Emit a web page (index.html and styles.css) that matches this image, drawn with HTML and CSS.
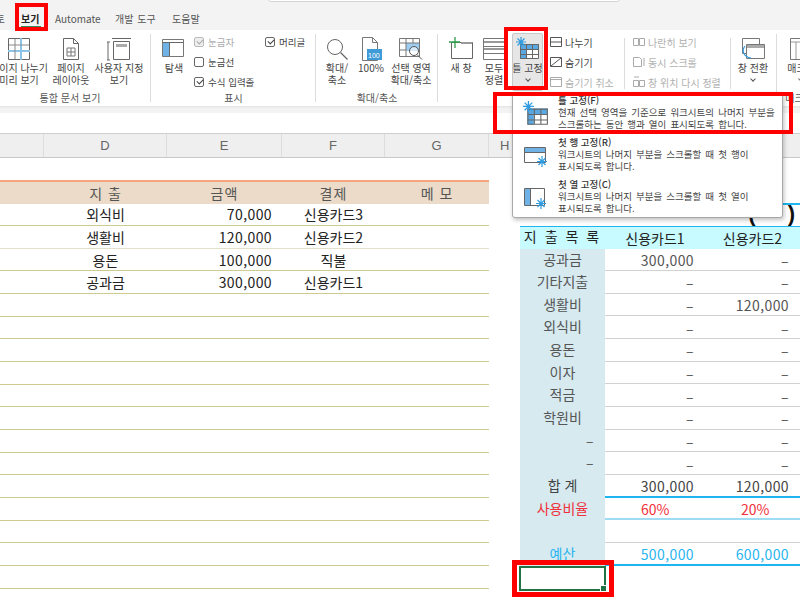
FILE: index.html
```html
<!DOCTYPE html>
<html lang="ko">
<head>
<meta charset="utf-8">
<title>보기</title>
<link rel="stylesheet" href="styles.css">
</head>
<body>
<div class="app">
  <header class="tabs">
    <div class="search"></div>
    <span class="tab cut">토</span>
    <span class="tab active">보기</span>
    <span class="tab">Automate</span>
    <span class="tab">개발 도구</span>
    <span class="tab">도움말</span>
  </header>

  <section class="ribbon">
    <div class="group g1">
      <div class="items">
        <div class="btn w60"><svg width="24" height="24" viewBox="0 0 24 24"><path d="M1.500 1.500h21v21h-21z" fill="#fff" stroke="#666"/><path d="M1 14h22M14 1v22" stroke="#8cc4e8" stroke-width="2"/><path d="M8 2v20M2 8h20" stroke="#888"/></svg><span>페이지 나누기<br>미리 보기</span></div>
        <div class="btn w44"><svg width="24" height="24" viewBox="0 0 24 24"><path d="M4.500 1.500h10l5 5v16h-15z" fill="#fff" stroke="#666"/><path d="M14.500 1.500v5h5" fill="none" stroke="#666"/><path d="M8 11h8v8H8zM8 15h8M12 11v8" fill="none" stroke="#777"/></svg><span>페이지<br>레이아웃</span></div>
        <div class="btn w52"><svg width="24" height="24" viewBox="0 0 24 24"><path d="M6.500 4.500h16v18h-16z" fill="#fff" stroke="#666"/><path d="M9 7h11v3H9z" fill="#aaa"/><path d="M5 1.500h19M1 5v18M-1 5h4M-1 23h4" stroke="#666" fill="none"/></svg><span>사용자 지정<br>보기</span></div>
      </div>
      <div class="glabel">통합 문서 보기</div>
    </div>

    <div class="group g2">
      <div class="items">
        <div class="btn w40"><svg width="24" height="24" viewBox="0 0 24 24"><path d="M.5 2.500h21v17h-21z" fill="#fff" stroke="#777"/><path d="M1 6h6v13H1z" fill="#6fb3e6"/><path d="M7.500 6v13M1 5.500h20" stroke="#666"/></svg><span>탐색</span></div>
        <div class="checks c1">
          <label class="check off"><i class="box on"></i>눈금자</label>
          <label class="check"><i class="box"></i>눈금선</label>
          <label class="check"><i class="box on"></i>수식 입력줄</label>
        </div>
        <div class="checks c2">
          <label class="check"><i class="box on"></i>머리글</label>
        </div>
      </div>
      <div class="glabel">표시</div>
    </div>

    <div class="group g3">
      <div class="items">
        <div class="btn w36"><svg width="24" height="24" viewBox="0 0 24 24"><circle cx="10" cy="10" r="7.500" fill="#fff" stroke="#666"/><path d="M15.500 15.500l7 7" stroke="#666" stroke-width="1.200"/></svg><span>확대/<br>축소</span></div>
        <div class="btn w32"><svg width="24" height="24" viewBox="0 0 24 24"><path d="M3.500 .5h10l5 5v18h-15z" fill="#fff" stroke="#777"/><path d="M13.500 .5v5h5" fill="none" stroke="#777"/><path d="M8 12h15v11H8z" fill="#3f9bd8"/></svg><b class="hundred">100</b><span>100%</span></div>
        <div class="btn w48"><svg width="24" height="24" viewBox="0 0 24 24"><path d="M.5 1.500h20v18H.5z" fill="#fff" stroke="#777"/><path d="M7 6h13v8H7z" fill="#9fcdf0"/><path d="M1 6h20M1 13h6M7 1v19M14 1v5" stroke="#777"/><circle cx="15" cy="14" r="4.500" fill="#fff" fill-opacity=".6" stroke="#555"/><path d="M18 17.500l5 5" stroke="#555"/></svg><span>선택 영역<br>확대/축소</span></div>
      </div>
      <div class="glabel">확대/축소</div>
    </div>

    <div class="group g4">
      <div class="items">
        <div class="btn w34"><svg width="24" height="24" viewBox="0 0 24 24"><path d="M2.500 5.500h21v16h-21z" fill="#fff" stroke="#666"/><path d="M12 5h11v2H12z" fill="#999"/><path d="M6 0v11M0 5h11" stroke="#2e9e4b" stroke-width="1.300"/></svg><span>새 창</span></div>
        <div class="btn w32"><svg width="24" height="24" viewBox="0 0 24 24"><path d="M1.500 1.500h21v21h-21z" fill="#fff" stroke="#777"/><path d="M2 4h20v2H2zM2 11h20v2H2z" fill="#999"/><path d="M2 9.500h20M2 16.500h20" stroke="#777"/></svg><span>모두<br>정렬</span></div>
        <div class="btn freeze">
          <svg width="24" height="24" viewBox="0 0 24 24"><use href="#i-freeze"/></svg>
          <span>틀 고정</span>
          <em class="chev"></em>
        </div>
        <div class="stack s1">
          <div class="small"><svg width="14" height="12" viewBox="0 0 14 12"><path d="M1.500 1.500h11v9h-11zM1.500 6h11" fill="#fff" stroke="#555"/></svg>나누기</div>
          <div class="small"><svg width="14" height="12" viewBox="0 0 14 12"><path d="M1.500 1.500h11v9h-11z" fill="#fff" stroke="#555"/><path d="M2 10l10-8" stroke="#555"/></svg>숨기기</div>
          <div class="small off"><svg width="14" height="12" viewBox="0 0 14 12"><path d="M1.500 1.500h11v9h-11zM2 3.500h10" fill="#fff" stroke="#aaa"/></svg>숨기기 취소</div>
        </div>
        <div class="stack s2">
          <div class="small off"><svg width="14" height="12" viewBox="0 0 14 12"><path d="M1.500 2.500h5v7h-5zM7.500 2.500h5v7h-5z" fill="#fff" stroke="#aaa"/></svg>나란히 보기</div>
          <div class="small off"><svg width="14" height="12" viewBox="0 0 14 12"><path d="M1.500 1.500h6l2 2v7h-8z" fill="#fff" stroke="#aaa"/><path d="M12 2v8" stroke="#aaa"/></svg>동시 스크롤</div>
          <div class="small off"><svg width="14" height="12" viewBox="0 0 14 12"><path d="M1.500 4.500h5v6h-5zM7.500 4.500h5v6h-5z" fill="#fff" stroke="#aaa"/><path d="M2 1h5" stroke="#aaa"/></svg>창 위치 다시 정렬</div>
        </div>
        <div class="btn w44 switch"><svg width="24" height="24" viewBox="0 0 24 24"><path d="M1.500 1.500h17v15h-17z" fill="#fff" stroke="#777"/><path d="M5.500 7.500h18v14h-18z" fill="#fff" stroke="#777"/><path d="M6 8h17v3H6z" fill="#aaa"/><path d="M4 9c-4 5-1 11 6 12" fill="none" stroke="#2f9ce0" stroke-width="1.200"/></svg><span>창 전환</span><em class="chev"></em></div>
      </div>
    </div>

    <div class="group g5">
      <div class="items">
        <div class="btn w44"><svg width="24" height="24" viewBox="0 0 24 24"><path d="M1.500 1.500h21v21h-21z" fill="#fff" stroke="#777"/><path d="M2 5h20M7 5v17M12 8h7M12 12h7M12 16h7" stroke="#999"/></svg><span>매크로</span><em class="chev"></em></div>
      </div>
      <div class="glabel">매크로</div>
    </div>
  </section>

  <div class="band"></div>
  <div class="formula"></div>

  <div class="cols">
    <span class="col c-c"></span>
    <span class="col c-d">D</span>
    <span class="col c-e">E</span>
    <span class="col c-f">F</span>
    <span class="col c-g">G</span>
    <span class="col c-h">H</span>
  </div>

  <main class="sheet">
    <div class="ledger">
      <div class="lrow lhead"><span></span><span>지 출</span><span class="ctr">금액</span><span>결제</span><span>메 모</span></div>
      <div class="lrow"><span></span><span>외식비</span><span class="num">70,000</span><span>신용카드3</span><span></span></div>
      <div class="lrow pale"><span></span><span>생활비</span><span class="num">120,000</span><span>신용카드2</span><span></span></div>
      <div class="lrow"><span></span><span>용돈</span><span class="num">100,000</span><span>직불</span><span></span></div>
      <div class="lrow"><span></span><span>공과금</span><span class="num">300,000</span><span>신용카드1</span><span></span></div>
      <div class="lrow"></div><div class="lrow"></div><div class="lrow"></div><div class="lrow"></div>
      <div class="lrow"></div><div class="lrow"></div><div class="lrow"></div><div class="lrow"></div>
      <div class="lrow"></div><div class="lrow"></div><div class="lrow"></div><div class="lrow"></div>
      <div class="lrow"></div><div class="lrow"></div>
    </div>

    <div class="summary">
      <div class="title"><span class="paren">(</span><span class="paren">)</span></div>
      <div class="srow shead"><span>지 출 목 록</span><span>신용카드1</span><span>신용카드2</span></div>
      <div class="srow"><span>공과금</span><span class="num">300,000</span><span class="num">–</span></div>
      <div class="srow"><span>기타지출</span><span class="num">–</span><span class="num">–</span></div>
      <div class="srow"><span>생활비</span><span class="num">–</span><span class="num">120,000</span></div>
      <div class="srow"><span>외식비</span><span class="num">–</span><span class="num">–</span></div>
      <div class="srow"><span>용돈</span><span class="num">–</span><span class="num">–</span></div>
      <div class="srow"><span>이자</span><span class="num">–</span><span class="num">–</span></div>
      <div class="srow"><span>적금</span><span class="num">–</span><span class="num">–</span></div>
      <div class="srow"><span>학원비</span><span class="num">–</span><span class="num">–</span></div>
      <div class="srow"><span class="num">–</span><span class="num">–</span><span class="num">–</span></div>
      <div class="srow"><span class="num">–</span><span class="num">–</span><span class="num">–</span></div>
      <div class="srow total"><span>합 계</span><span class="num">300,000</span><span class="num">120,000</span></div>
      <div class="srow rate"><span>사용비율</span><span class="pct">60%</span><span class="pct">20%</span></div>
      <div class="srow"><span></span><span></span><span></span></div>
      <div class="srow budget"><span>예산</span><span class="num">500,000</span><span class="num">600,000</span></div>
      <div class="cellrow"><div class="selected"><i class="handle"></i></div></div>
    </div>
  </main>

  <aside class="menu">
    <div class="mitem">
      <svg width="26" height="26" viewBox="0 0 26 26"><use href="#i-freeze"/></svg>
      <div class="mtext"><b>틀 고정(F)</b><p>현재 선택 영역을 기준으로 워크시트의 나머지 부분을<br>스크롤하는 동안 행과 열이 표시되도록 합니다.</p></div>
    </div>
    <div class="mitem">
      <svg width="26" height="26" viewBox="0 0 26 26"><path d="M1.500 4.500h21v15h-21z" fill="#fff" stroke="#666"/><path d="M2 5h20v4H2z" fill="#6fb3e6"/><path d="M1.500 9.500h21" stroke="#666"/><path d="M19 13v11M14 18.500h10M15.500 15l7 7M22.500 15l-7 7" stroke="#2f9ce0" stroke-width="1.200"/></svg>
      <div class="mtext"><b>첫 행 고정(R)</b><p>워크시트의 나머지 부분을 스크롤할 때 첫 행이<br>표시되도록 합니다.</p></div>
    </div>
    <div class="mitem">
      <svg width="26" height="26" viewBox="0 0 26 26"><path d="M1.500 3.500h20v17h-20z" fill="#fff" stroke="#666"/><path d="M2 4h5v16H2z" fill="#6fb3e6"/><path d="M7.500 4v16" stroke="#666"/><path d="M18 13v11M13 18.500h10M14.500 15l7 7M21.500 15l-7 7" stroke="#2f9ce0" stroke-width="1.200"/></svg>
      <div class="mtext"><b>첫 열 고정(C)</b><p>워크시트의 나머지 부분을 스크롤할 때 첫 열이<br>표시되도록 합니다.</p></div>
    </div>
  </aside>

  <div class="mark m-tab"></div>
  <div class="mark m-btn"></div>
  <div class="mark m-item"></div>
  <div class="mark m-cell"></div>

  <svg class="defs" width="0" height="0">
    <symbol id="i-freeze" viewBox="0 0 24 24">
      <path d="M4 7h19v15H4z" fill="#fff"/>
      <path d="M4 7h19v5H4zM4 12h6v10H4z" fill="#5aa8e2"/>
      <path d="M4.500 7.500h18v14h-18zM4 12.500h19M4 17.500h19M10.500 7v15M16.500 7v15" fill="none" stroke="#666"/>
      <path d="M5 0v10M0 5h10M1.500 1.500l7 7M8.500 1.500l-7 7" stroke="#2f9ce0" stroke-width="1.200"/>
    </symbol>
  </svg>
</div>
</body>
</html>
```

FILE: styles.css
```css
* { box-sizing: border-box; }
html, body { margin: 0; padding: 0; }
body { width: 800px; height: 600px; overflow: hidden; background: #fff; font-family: "Noto Sans CJK KR", "Noto Sans", sans-serif; color: #444; }
.app { position: relative; width: 800px; height: 600px; overflow: hidden; }
.defs { position: absolute; }

/* tabs */
.tabs { position: relative; height: 30px; background: #f3f3f3; display: flex; align-items: center; padding-top: 7px; font-size: 10px; color: #555; }
.search { position: absolute; left: 268px; top: -6px; width: 352px; height: 8px; background: #fff; border: 1px solid #d4d4d4; border-radius: 3px; }
.tab { white-space: nowrap; }
.tab.cut { width: 5px; overflow: hidden; direction: rtl; margin-right: 16px; }
.tab.active { width: 20px; margin-right: 14px; font-weight: 700; color: #222; border-bottom: 1px solid #2f8a57; line-height: 15px; height: 16px; }
.tab:nth-of-type(3) { width: 60px; }
.tab:nth-of-type(4) { width: 57px; word-spacing: 1px; }

/* ribbon */
.ribbon { height: 76px; background: #fff; display: flex; overflow: hidden; }
.group { position: relative; flex: none; height: 76px; padding-top: 3px; }
.group::after { content: ""; position: absolute; right: 0; top: 4px; height: 68px; width: 1px; background: #dcdcdc; }
.g1 { width: 162px; margin-left: -11px; }
.g2 { width: 165px; padding-left: 3px; }
.g3 { width: 122px; padding-left: 3px; }
.g4 { width: 339px; padding-left: 6px; }
.g5 { width: 44px; padding-left: 2px; }
.g5::after { display: none; }
.items { display: flex; height: 60px; }
.glabel { position: absolute; left: 0; right: 0; top: 61px; text-align: center; font-size: 10px; line-height: 14px; color: #555; }
.btn { position: relative; flex: none; display: flex; flex-direction: column; align-items: center; padding-top: 4px; font-size: 10px; line-height: 12px; text-align: center; color: #444; white-space: nowrap; }
.btn svg { display: block; margin-bottom: 1px; }
.w60 { width: 60px; } .w52 { width: 52px; } .w48 { width: 48px; } .w44 { width: 44px; } .w40 { width: 40px; } .w36 { width: 36px; } .w34 { width: 34px; } .w32 { width: 32px; }
.hundred { position: absolute; left: 13px; top: 18px; font-size: 7px; line-height: 9px; font-weight: 400; color: #fff; font-family: "Liberation Sans", sans-serif; }
.btn.freeze { width: 31px; height: 58px; margin-left: 2px; background: #e6e6e6; border: 1px solid #c8c8c8; border-radius: 2px; padding-top: 3px; }
.chev { display: block; width: 4px; height: 4px; margin-top: 3px; border-right: 1px solid #555; border-bottom: 1px solid #555; transform: rotate(45deg); }

.checks { display: flex; flex-direction: column; margin-top: -1px; }
.c1 { width: 71px; }
.check { display: flex; align-items: center; height: 20px; font-size: 9.500px; color: #444; white-space: nowrap; }
.check.off { color: #aaa; }
.box { display: block; position: relative; width: 10px; height: 10px; margin-right: 4px; border: 1px solid #666; border-radius: 2px; background: #fff; }
.box.on::after { content: ""; position: absolute; left: 2px; top: 1px; width: 5px; height: 3px; border-left: 1px solid #444; border-bottom: 1px solid #444; transform: rotate(-45deg); }
.check.off .box { border-color: #bbb; background: #eee; }
.check.off .box.on::after { border-color: #aaa; }

.stack { flex: none; display: flex; flex-direction: column; margin-top: -1px; }
.s1 { width: 83px; margin-left: 6px; position: relative; }
.s1::after { content: ""; position: absolute; right: 7px; top: 6px; bottom: 4px; width: 1px; background: #dcdcdc; }
.s2 { width: 99px; position: relative; }
.s2::after { content: ""; position: absolute; right: 0; top: 6px; bottom: 4px; width: 1px; background: #dcdcdc; }
.small { display: flex; align-items: center; gap: 2px; height: 20px; font-size: 10px; color: #444; white-space: nowrap; }
.small.off { color: #b0b0b0; }

.band { height: 7px; background: linear-gradient(#e4e4e4, #f3f3f3 40%, #f3f3f3); }
.formula { height: 21px; background: #fff; border-bottom: 1px solid #cfcfcf; }

/* column headers */
.cols { display: flex; height: 24px; background: #efefef; border-bottom: 1px solid #c8c8c8; font-family: "Liberation Sans", sans-serif; font-size: 13px; color: #666; }
.col { flex: none; display: flex; align-items: center; justify-content: center; border-right: 1px solid #dcdcdc; }
.c-c { width: 44px; } .c-d { width: 123px; } .c-e { width: 115px; } .c-f { width: 103px; } .c-g { width: 104px; } .c-h { flex: 1; justify-content: flex-start; padding-left: 11px; border-right: 0; }

/* sheet */
.sheet { display: flex; align-items: flex-start; height: 442px; font-size: 14px; color: #222; }
.ledger { flex: none; width: 489px; padding-top: 22px; }
.lrow { display: grid; grid-template-columns: 44px 123px 115px 103px 104px; height: 22.670px; align-items: center; text-align: center; border-bottom: 1px solid #cfcb8f; line-height: 20px; }
.lrow.pale { border-bottom: 1px solid #e2e0c8; }
.lhead { height: 23.500px; background: #ebdbc8; border-top: 2px solid #f4a57c; border-bottom: 0; color: #555; letter-spacing: 1px; line-height: 18px; }
.num { text-align: right; letter-spacing: .4px; padding-right: 10px; }
.summary { flex: none; width: 280px; margin-left: 31px; }
.title { height: 68px; position: relative; display: flex; justify-content: flex-end; align-items: flex-end; gap: 32px; padding-right: 5px; font-size: 22px; color: #111; line-height: 26px; font-family: "Liberation Sans", sans-serif; font-weight: 700; }
.title::before { content: ""; position: absolute; left: 258px; right: 0; top: 45px; height: 2px; background: #1fb5f0; }
.paren { position: relative; top: 1px; }
.srow { display: grid; grid-template-columns: 85px 100px 95px; height: 22.670px; align-items: center; border-bottom: 1px solid #d2d2d2; color: #555; line-height: 20px; }
.srow > span:first-child { background: #d6eaf0; text-align: center; height: 22.670px; line-height: 21px; }
.srow > span.num { padding-right: 11px; }
.srow > span.num:first-child { text-align: right; }
.shead { height: 22.500px; background: #c8fbff; border-top: 1px solid #1fb5f0; border-bottom: 0; color: #222; text-align: center; line-height: 18px; }
.shead > span:first-child { background: transparent; letter-spacing: 2px; line-height: 18px; }
.total { border-bottom: 2px solid #1fb5f0; color: #444; }
.rate { color: #f0303a; border-bottom: 2px solid #9fdcf4; }
.pct { padding-left: 36px; }
.budget { color: #28b4ee; border-bottom: 2px solid #1fb5f0; }
.selected { position: relative; width: 87px; height: 25px; margin-left: -1px; border: 2px solid #217346; }
.handle { position: absolute; right: -3px; bottom: -3px; width: 5px; height: 5px; background: #217346; border: 1px solid #fff; box-sizing: content-box; }

/* overlay dropdown */
.menu { position: absolute; left: 512px; top: 92px; width: 271px; height: 126px; padding-top: 1px; background: #fff; border: 1px solid #a8a8a8; border-radius: 3px; box-shadow: 1px 2px 4px rgba(0,0,0,.25); }
.mitem { display: flex; height: 42px; }
.mitem svg { flex: none; margin: 7px 9px 0 10px; }
.mtext { font-size: 9.500px; line-height: 12px; color: #444; white-space: nowrap; }
.mtext b { display: block; font-weight: 500; color: #333; }
.mtext p { margin: 0; word-spacing: 1.400px; }

/* red annotation rectangles */
.mark { position: absolute; border: 4px solid #f00; }
.m-tab { left: 15px; top: 3px; width: 33px; height: 28px; }
.m-btn { left: 504px; top: 27px; width: 44px; height: 63px; }
.m-item { left: 493px; top: 92px; width: 300px; height: 42px; }
.m-cell { left: 512px; top: 560px; width: 102px; height: 37px; border-width: 5px; }
```
